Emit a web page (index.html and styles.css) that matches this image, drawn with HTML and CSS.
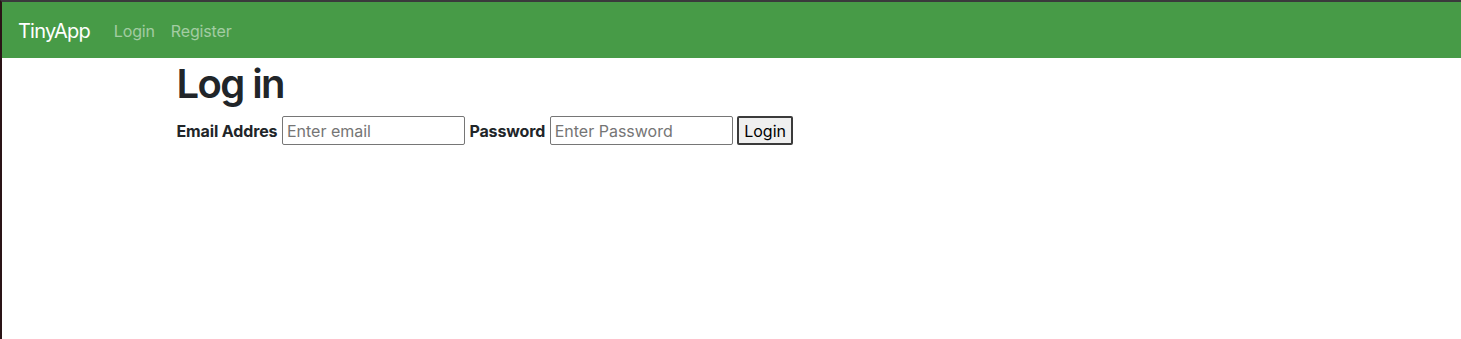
FILE: index.html
```html
<!DOCTYPE html>
<html lang="en">
<head>
    <meta charset="UTF-8">
    <meta name="viewport" content="width=device-width, initial-scale=1.0">
    <title>TinyApp</title>
    <link rel="stylesheet" href="styles.css">
</head>
<body>
    <nav class="navbar">
        <a class="navbar-brand" href="#">TinyApp</a>
        <a class="nav-link" href="#">Login</a>
        <a class="nav-link" href="#">Register</a>
    </nav>
    <main class="container">
        <h1>Log in</h1>
        <form class="login-form">
            <label for="email">Email Addres</label>
            <input type="text" id="email" name="email" placeholder="Enter email">
            <label for="password">Password</label>
            <input type="password" id="password" name="password" placeholder="Enter Password">
            <button type="submit">Login</button>
        </form>
    </main>
</body>
</html>
```

FILE: styles.css
```css
* {
    box-sizing: border-box;
}
body {
    font-family: Inter, "Noto Sans", sans-serif;
    font-size: 16px;
    line-height: 1.5;
    color: #212529;
    margin: 0;
    min-height: 339px;
    border-top: 2px solid #3a3a3c;
    border-left: 2px solid #2a1416;
}
.navbar {
    display: flex;
    align-items: center;
    height: 56px;
    background-color: #479b47;
    padding: 8px 16px;
}
.navbar-brand {
    font-size: 20px;
    line-height: 30px;
    letter-spacing: -0.04em;
    padding: 6px 0 4px;
    margin-right: 16px;
    color: #fff;
    text-decoration: none;
}
.nav-link {
    padding: 9px 8px 7px;
    letter-spacing: -0.01em;
    color: rgba(255, 255, 255, 0.5);
    text-decoration: none;
}
.container {
    max-width: 1140px;
    margin: 0 auto;
    padding: 0 15px;
}
h1 {
    font-size: 40px;
    font-weight: 600;
    line-height: 1.2;
    letter-spacing: -0.04em;
    margin: 2px 0 8px;
}
.login-form label {
    font-weight: 700;
    letter-spacing: -0.008em;
}
.login-form input {
    font-family: inherit;
    font-size: 16px;
    width: 183px;
    height: 29px;
    padding: 1px 4px;
    border: 1px solid #767676;
    border-radius: 2px;
    color: #212529;
}
.login-form input::placeholder {
    color: #757575;
}
.login-form button {
    font-family: inherit;
    font-size: 16px;
    height: 29px;
    padding: 1px 5px;
    border: 2px solid #3b3b3b;
    border-radius: 2px;
    background-color: #efefef;
    color: #000;
}
```
